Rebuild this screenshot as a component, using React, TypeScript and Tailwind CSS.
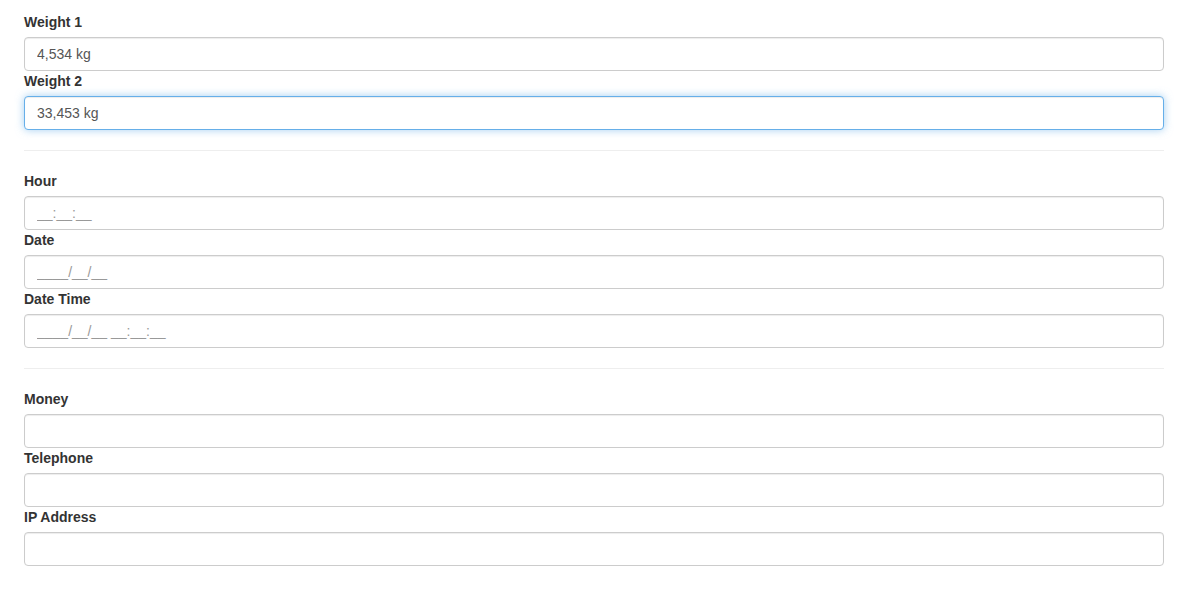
import React from 'react';

interface FieldProps {
  label: string;
  value?: string;
  placeholder?: string;
  focused?: boolean;
}

const Field: React.FC<FieldProps> = ({ label, value, placeholder, focused = false }) => {
  return (
    <div>
      <label className="block mb-[5px] text-[14px] leading-[20px] font-bold text-[#333]">
        {label}
      </label>
      <input
        type="text"
        defaultValue={value}
        placeholder={placeholder}
        className={
          focused
            ? 'block w-full h-[34px] px-[12px] py-[6px] text-[14px] leading-[20px] text-[#555] bg-white rounded-[4px] border border-[#66afe9] outline-none shadow-[inset_0_1px_1px_rgba(0,0,0,0.075),0_0_8px_rgba(102,175,233,0.6)] placeholder:text-[#999]'
            : 'block w-full h-[34px] px-[12px] py-[6px] text-[14px] leading-[20px] text-[#555] bg-white rounded-[4px] border border-[#ccc] outline-none shadow-[inset_0_1px_1px_rgba(0,0,0,0.075)] placeholder:text-[#999]'
        }
      />
    </div>
  );
};

export default function App() {
  return (
    <div
      className="min-h-screen bg-white px-[24px] pt-[12px] pb-[20px] w-[1188px]"
      style={{ fontFamily: '"Liberation Sans", Arial, sans-serif' }}
    >
      {/* Weights */}
      <Field label="Weight 1" value="4,534 kg" />
      <Field label="Weight 2" value="33,453 kg" focused />

      <hr className="my-[20px] border-0 border-t border-[#eee]" />

      {/* Dates */}
      <Field label="Hour" placeholder="__:__:__" />
      <Field label="Date" placeholder="____/__/__" />
      <Field label="Date Time" placeholder="____/__/__ __:__:__" />

      <hr className="my-[20px] border-0 border-t border-[#eee]" />

      {/* Others */}
      <Field label="Money" />
      <Field label="Telephone" />
      <Field label="IP Address" />
    </div>
  );
}
